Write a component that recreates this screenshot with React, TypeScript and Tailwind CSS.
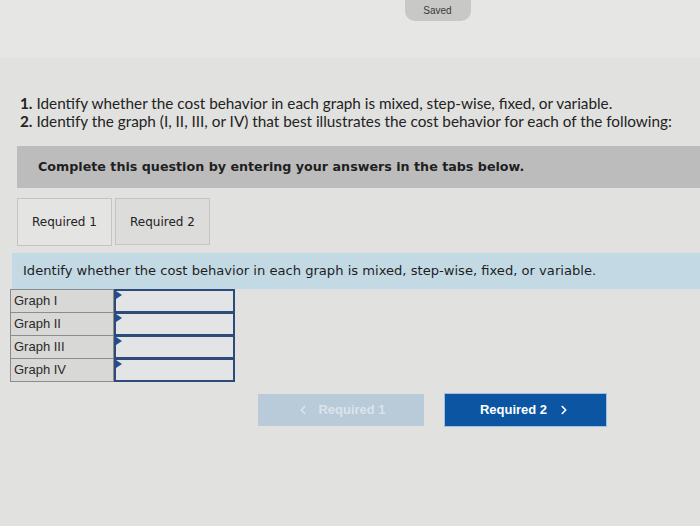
import { ChevronLeft, ChevronRight } from 'lucide-react';

const rows = ['Graph I', 'Graph II', 'Graph III', 'Graph IV'];

export default function App() {
    return (
        <div className="w-[700px] h-[526px] overflow-hidden bg-[#e1e1df] relative">
            {/* saved pill */}
            <div className="h-[58px] bg-[#e6e6e4] flex justify-center">
                <div className="ml-[175px] w-[66px] h-[21px] rounded-b-[10px] bg-[#c8c8c7] flex items-center justify-center text-[10px] text-[#3a3a3a] font-['Liberation_Sans',sans-serif]">
                    Saved
                </div>
            </div>

            <div className="pt-[36px] pl-[20px] font-['Lato',sans-serif] text-[15.3px] leading-[18px] text-[#232323]">
                <p><span className="font-bold">1.</span> Identify whether the cost behavior in each graph is mixed, step-wise, fixed, or variable.</p>
                <p><span className="font-bold">2.</span> Identify the graph (I, II, III, or IV) that best illustrates the cost behavior for each of the following:</p>
            </div>

            <div className="mt-[16px] ml-[17px] h-[42px] bg-[#bcbcbc] flex items-center pl-[21px] font-['DejaVu_Sans',sans-serif] font-bold text-[12.7px] text-[#1f1f1f]">
                Complete this question by entering your answers in the tabs below.
            </div>

            <div className="mt-[10px] ml-[17px] flex gap-[3px] font-['DejaVu_Sans',sans-serif] text-[12px] text-[#222]">
                <div className="w-[95px] h-[48px] border border-[#c4c4c4] bg-[#e4e4e2] flex items-center justify-center">Required 1</div>
                <div className="w-[95px] h-[47px] border border-[#c4c4c4] bg-[#dcdcda] flex items-center justify-center">Required 2</div>
            </div>

            <div className="mt-[7px] ml-[12px] h-[36px] bg-[#c3dae5] flex items-center pl-[11px] font-['DejaVu_Sans',sans-serif] text-[13.1px] text-[#1e1e1e]">
                Identify whether the cost behavior in each graph is mixed, step-wise, fixed, or variable.
            </div>

            <div className="ml-[10px] w-[225px] font-['Liberation_Sans',sans-serif] text-[13px] text-[#2a2a2a]">
                {rows.map((r) => (
                    <div key={r} className="flex h-[24px] -mb-px">
                        <div className="w-[104px] border border-[#8c8c8c] bg-[#d8d8d6] flex items-center pl-[3px]">{r}</div>
                        <div className="relative flex-1 border-2 border-[#2e4a78] bg-[#e2e4e6]">
                            <span className="absolute left-0 top-0 w-0 h-0 border-t-[4px] border-b-[4px] border-l-[6px] border-t-transparent border-b-transparent border-l-[#1c4f95]" />
                        </div>
                    </div>
                ))}
            </div>

            <div className="mt-[13px] flex gap-[21px] ml-[258px] font-['Liberation_Sans',sans-serif] font-bold text-[13px]">
                <div className="w-[166px] h-[32px] bg-[#b9cad8] text-[#dbe4ec] flex items-center justify-center gap-[8px]">
                    <ChevronLeft size={14} strokeWidth={3} />
                    Required 1
                </div>
                <div className="w-[161px] h-[32px] bg-[#0b55a3] text-white flex items-center justify-center gap-[10px] outline outline-1 outline-[#9fc1e0]">
                    Required 2
                    <ChevronRight size={14} strokeWidth={3} />
                </div>
            </div>
        </div>
    );
}
